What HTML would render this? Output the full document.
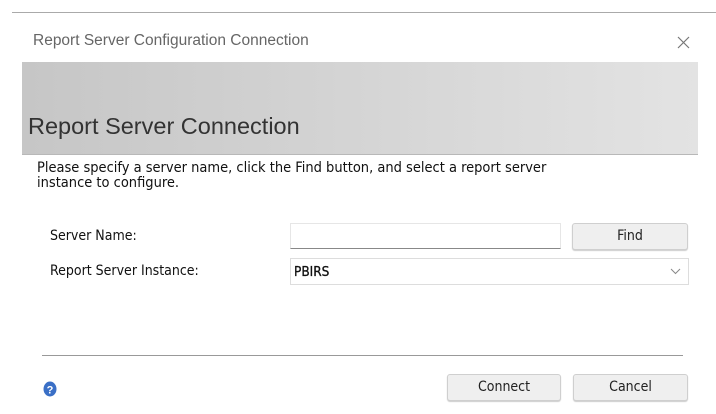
<!DOCTYPE html>
<html><head><meta charset="utf-8"><style>
body{margin:0;width:716px;height:414px;background:#fff;position:relative;overflow:hidden;font-family:"DejaVu Sans Condensed","Liberation Sans",sans-serif;color:#111}
.a{position:absolute}
.btn{position:absolute;background:#efefef;border:1px solid #cfcfcf;border-radius:3px;box-shadow:0 1px 1px #ccc;font-size:14px;text-align:center;line-height:25px;color:#222;box-sizing:border-box;height:27px}
</style></head><body>
<div class="a" style="left:12px;top:12px;width:704px;height:1px;background:#aaa"></div>
<div class="a" style="left:33px;top:32px;font-size:15.5px;color:#666;font-family:'Liberation Sans',sans-serif">Report Server Configuration Connection</div>
<svg class="a" style="left:677px;top:36px" width="13" height="13"><path d="M1 1L12 12M12 1L1 12" stroke="#777" stroke-width="1.2"/></svg>
<div class="a" style="left:22px;top:62px;width:676px;height:92px;background:linear-gradient(90deg,#c6c6c6,#e3e3e3);border-bottom:1px solid #b8b8b8"></div>
<div class="a" style="left:28px;top:113px;font-size:23.5px;color:#333;font-family:'Liberation Sans',sans-serif">Report Server Connection</div>
<div class="a" style="left:37px;top:161px;font-size:14.5px;line-height:15px;color:#111">Please specify a server name, click the Find button, and select a report server<br>instance to configure.</div>
<div class="a" style="left:50px;top:228px;font-size:14px">Server Name:</div>
<div class="a" style="left:50px;top:263px;font-size:14px">Report Server Instance:</div>
<div class="a" style="left:290px;top:223px;width:271px;height:26px;border:1px solid #e6e6e6;border-bottom:1px solid #888;box-sizing:border-box"></div>
<div class="btn" style="left:572px;top:223px;width:116px">Find</div>
<div class="a" style="left:290px;top:258px;width:399px;height:27px;border:1px solid #ddd;box-sizing:border-box;font-size:13.5px;line-height:26px;padding-left:3px;color:#111;-webkit-text-stroke:0.3px #111">PBIRS</div>
<svg class="a" style="left:670px;top:268px" width="11" height="7"><path d="M1 1L5.5 5.5L10 1" stroke="#888" fill="none"/></svg>
<div class="a" style="left:42px;top:355px;width:641px;height:1px;background:#999"></div>
<svg class="a" style="left:43px;top:381px" width="14" height="16"><ellipse cx="7" cy="8" rx="6.5" ry="7.5" fill="#3a6fc6"/><text x="7" y="12.5" font-size="11" font-weight="bold" fill="#fff" text-anchor="middle" font-family="Liberation Sans">?</text></svg>
<div class="btn" style="left:447px;top:374px;width:114px">Connect</div>
<div class="btn" style="left:573px;top:374px;width:115px">Cancel</div>
</body></html>
